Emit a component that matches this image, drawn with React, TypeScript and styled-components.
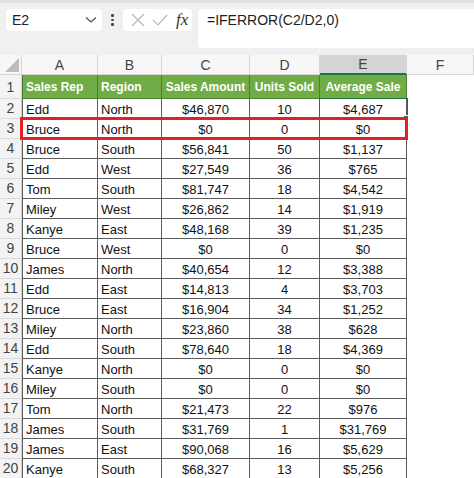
import React from 'react';
import styled, {createGlobalStyle} from "styled-components";

const GlobalStyle = createGlobalStyle`
  html, body {
    margin: 0;
    padding: 0;
    background: #ffffff;
  }
  body {
    width: 474px;
    height: 478px;
    overflow: hidden;
    font-family: "Liberation Sans", Arial, sans-serif;
  }
`

type Row = [string, string, string, string, string]

const rows: Row[] = [
    ['Edd', 'North', '$46,870', '10', '$4,687'],
    ['Bruce', 'North', '$0', '0', '$0'],
    ['Bruce', 'South', '$56,841', '50', '$1,137'],
    ['Edd', 'West', '$27,549', '36', '$765'],
    ['Tom', 'South', '$81,747', '18', '$4,542'],
    ['Miley', 'West', '$26,862', '14', '$1,919'],
    ['Kanye', 'East', '$48,168', '39', '$1,235'],
    ['Bruce', 'West', '$0', '0', '$0'],
    ['James', 'North', '$40,654', '12', '$3,388'],
    ['Edd', 'East', '$14,813', '4', '$3,703'],
    ['Bruce', 'East', '$16,904', '34', '$1,252'],
    ['Miley', 'North', '$23,860', '38', '$628'],
    ['Edd', 'South', '$78,640', '18', '$4,369'],
    ['Kanye', 'North', '$0', '0', '$0'],
    ['Miley', 'South', '$0', '0', '$0'],
    ['Tom', 'North', '$21,473', '22', '$976'],
    ['James', 'South', '$31,769', '1', '$31,769'],
    ['James', 'East', '$90,068', '16', '$5,629'],
    ['Kanye', 'South', '$68,327', '13', '$5,256'],
]

const headers = ['Sales Rep', 'Region', 'Sales Amount', 'Units Sold', 'Average Sale']
const letters = ['A', 'B', 'C', 'D', 'E', 'F']

const App = () => {
    return (
        <>
            <GlobalStyle/>
            <Page>
                <FormulaBar>
                    <NameBox>
                        <span>E2</span>
                        <svg width="12" height="8" viewBox="0 0 12 8">
                            <polyline points="1,1.5 6,6 11,1.5" fill="none" stroke="#555" strokeWidth="1.3"/>
                        </svg>
                    </NameBox>
                    <Dots>
                        <i/><i/><i/>
                    </Dots>
                    <FxBox>
                        <svg width="14" height="14" viewBox="0 0 14 14">
                            <path d="M1 1 L13 13 M13 1 L1 13" stroke="#b8b8b8" strokeWidth="1.2"/>
                        </svg>
                        <svg width="16" height="14" viewBox="0 0 16 14">
                            <polyline points="1,7 6,12 15,2" fill="none" stroke="#b8b8b8" strokeWidth="1.2"/>
                        </svg>
                        <Fx>fx</Fx>
                    </FxBox>
                    <FormulaInput>=IFERROR(C2/D2,0)</FormulaInput>
                </FormulaBar>

                <Sheet>
                    <Corner>
                        <svg width="14" height="14" viewBox="0 0 14 14">
                            <polygon points="14,0 14,14 0,14" fill="#bcbcbc"/>
                        </svg>
                    </Corner>
                    {letters.map(l => (
                        <ColHead key={l} $active={l === 'E'}>{l}</ColHead>
                    ))}

                    <RowHead $tall>1</RowHead>
                    {headers.map((h, i) => (
                        <HeadCell key={h} $center={i > 1} $first={i === 0}>{h}</HeadCell>
                    ))}
                    <Blank/>

                    {rows.map((r, ri) => (
                        <React.Fragment key={ri}>
                            <RowHead>{ri + 2}</RowHead>
                            {r.map((v, ci) => (
                                <DataCell key={ci} $center={ci > 1} $first={ci === 0}
                                          $selected={ri === 0 && ci === 4}>
                                    {v}
                                    {ri === 0 && ci === 4 && <FillHandle/>}
                                </DataCell>
                            ))}
                            <Blank/>
                        </React.Fragment>
                    ))}

                    <Highlight/>
                </Sheet>
            </Page>
        </>
    );
};

export default App;

const Page = styled.div`
  width: 474px;
  height: 478px;
  overflow: hidden;
  background: #f0f0f0;
`

const FormulaBar = styled.div`
  display: flex;
  align-items: flex-start;
  height: 55px;
  box-sizing: border-box;
  padding: 6px 0 0 6px;
  border-top: 3px solid #e2e2e2;
`

const NameBox = styled.div`
  width: 96px;
  height: 22px;
  box-sizing: border-box;
  background: #ffffff;
  border-radius: 4px;
  display: flex;
  align-items: center;
  justify-content: space-between;
  padding: 0 5px 0 6px;
  font-size: 14px;
  color: #222;
`

const Dots = styled.div`
  width: 21px;
  height: 22px;
  display: flex;
  flex-direction: column;
  align-items: center;
  justify-content: center;
  gap: 2px;

  i {
    display: block;
    width: 2.5px;
    height: 2.5px;
    border-radius: 50%;
    background: #444;
  }
`

const FxBox = styled.div`
  width: 69px;
  height: 22px;
  box-sizing: border-box;
  background: #ffffff;
  border-radius: 4px;
  display: flex;
  align-items: center;
  gap: 7px;
  padding-left: 8px;
`

const Fx = styled.span`
  font-family: "Liberation Serif", "Times New Roman", serif;
  font-style: italic;
  font-size: 17px;
  color: #333;
  margin-left: 1px;
`

const FormulaInput = styled.div`
  flex: 1;
  margin-left: 6px;
  height: 39px;
  box-sizing: border-box;
  background: #ffffff;
  border-radius: 4px 0 0 4px;
  padding: 3px 0 0 9px;
  font-size: 14px;
  color: #222;
`

const Sheet = styled.div`
  position: relative;
  display: grid;
  grid-template-columns: 22px 76px 64px 88px 70px 87px 67px;
  grid-auto-rows: 20px;
  grid-template-rows: 20px 24px;
  background: #ffffff;
  font-size: 13px;
`

const Corner = styled.div`
  background: #f7f7f7;
  border-right: 1px solid #d6d6d6;
  border-bottom: 1px solid #d6d6d6;
  display: flex;
  align-items: flex-end;
  justify-content: flex-end;
  padding: 0 2px 2px 0;
  box-sizing: border-box;
`

const ColHead = styled.div<{ $active?: boolean }>`
  background: ${p => p.$active ? '#d4d4d4' : '#f7f7f7'};
  border-right: 1px solid #d6d6d6;
  border-bottom: ${p => p.$active ? '2px solid #217346' : '1px solid #d6d6d6'};
  box-sizing: border-box;
  display: flex;
  align-items: center;
  justify-content: center;
  color: #444;
  font-size: 14px;
`

const RowHead = styled.div<{ $tall?: boolean }>`
  background: #f3f3f3;
  border-right: 1px solid #d2d2d2;
  border-bottom: 1px solid #dadada;
  box-sizing: border-box;
  display: flex;
  align-items: flex-end;
  justify-content: center;
  padding-bottom: ${p => p.$tall ? '3px' : '2px'};
  color: #444;
  font-size: 14px;
`

const HeadCell = styled.div<{ $center?: boolean; $first?: boolean }>`
  background: #70ad47;
  color: #ffffff;
  font-weight: 700;
  font-size: 12px;
  box-sizing: border-box;
  border-right: 1px solid #4e7d30;
  border-bottom: 1px solid #4e7d30;
  border-left: ${p => p.$first ? '1px solid #4e7d30' : 'none'};
  display: flex;
  align-items: center;
  justify-content: ${p => p.$center ? 'center' : 'flex-start'};
  padding: 1px 3px 0;
  white-space: nowrap;
`

const DataCell = styled.div<{ $center?: boolean; $first?: boolean; $selected?: boolean }>`
  position: relative;
  box-sizing: border-box;
  border-right: 1px solid #5c5c5c;
  border-bottom: 1px solid #5c5c5c;
  border-left: ${p => p.$first ? '1px solid #5c5c5c' : 'none'};
  outline: ${p => p.$selected ? '1px solid #217346' : 'none'};
  display: flex;
  align-items: center;
  justify-content: ${p => p.$center ? 'center' : 'flex-start'};
  padding: 1px 3px 0;
  color: #111;
  white-space: nowrap;
`

const FillHandle = styled.span`
  position: absolute;
  right: -3px;
  bottom: -3px;
  width: 4px;
  height: 4px;
  background: #217346;
  border: 1px solid #ffffff;
`

const Blank = styled.div`
  background: #ffffff;
`

const Highlight = styled.div`
  position: absolute;
  left: 20px;
  top: 62px;
  width: 388px;
  height: 23px;
  box-sizing: border-box;
  border: 3px solid #e0202a;
  pointer-events: none;
`
